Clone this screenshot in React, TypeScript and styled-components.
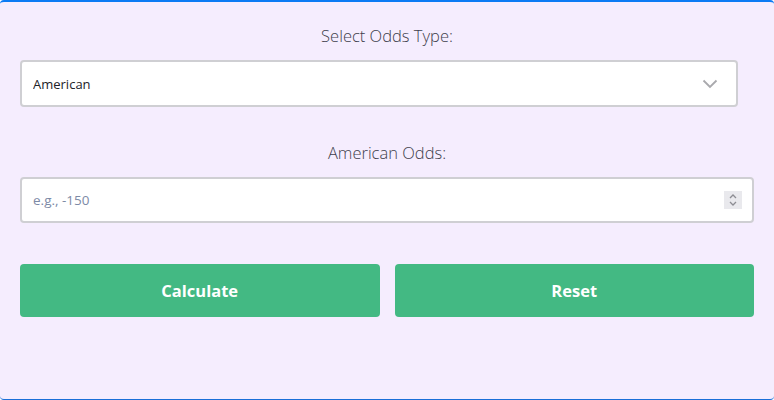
import React, { useState } from 'react';
import styled, { createGlobalStyle } from 'styled-components';

const GlobalStyle = createGlobalStyle`
  html, body {
    margin: 0;
    padding: 0;
    background: #ffffff;
  }
  body {
    font-family: 'Open Sans', 'Noto Sans', Arial, sans-serif;
  }
  * {
    box-sizing: border-box;
  }
`;

const Card = styled.div`
  width: 774px;
  height: 400px;
  background: #f5edfe;
  border-top: 2px solid #0b7bf4;
  border-bottom: 1px solid #1a6fd8;
  border-radius: 4px;
  padding: 21px 20px 0 20px;
  display: flex;
  flex-direction: column;
`;

const Field = styled.div<{ $gap: number }>`
  display: flex;
  flex-direction: column;
  margin-bottom: ${(p) => p.$gap}px;
`;

const Label = styled.label`
  display: block;
  text-align: center;
  font-size: 16.5px;
  font-weight: 300;
  color: #3e3e4c;
  line-height: 26px;
  margin-bottom: 11px;
`;

const ControlWrap = styled.div<{ $width: string }>`
  position: relative;
  width: ${(p) => p.$width};
`;

const Select = styled.select`
  appearance: none;
  width: 100%;
  height: 47px;
  padding: 0 40px 0 11px;
  background: #ffffff;
  border: 2px solid #cfcfd3;
  border-radius: 4px;
  font-family: 'Open Sans', 'Noto Sans', Arial, sans-serif;
  font-size: 13px;
  color: #222228;
  outline: none;
`;

const Input = styled.input`
  width: 100%;
  height: 46px;
  padding: 0 40px 0 11px;
  background: #ffffff;
  border: 2px solid #cfcfd3;
  border-radius: 4px;
  font-family: 'Open Sans', 'Noto Sans', Arial, sans-serif;
  font-size: 13.5px;
  color: #222228;
  outline: none;

  &::placeholder {
    color: #7d8aa6;
  }
`;

const Chevron = styled.svg`
  position: absolute;
  right: 20px;
  top: 50%;
  transform: translateY(-50%);
  pointer-events: none;
`;

const Spinner = styled.div`
  position: absolute;
  right: 12px;
  top: 50%;
  transform: translateY(-50%);
  width: 18px;
  height: 18px;
  background: #e9e9ed;
  display: flex;
  align-items: center;
  justify-content: center;
  pointer-events: none;
`;

const Buttons = styled.div`
  display: grid;
  grid-template-columns: 1fr 1fr;
  column-gap: 15px;
`;

const Button = styled.button`
  height: 53px;
  border: none;
  border-radius: 4px;
  background: #43b983;
  color: #ffffff;
  font-family: 'Open Sans', 'Noto Sans', Arial, sans-serif;
  font-size: 16.5px;
  font-weight: 700;
  cursor: pointer;
`;

export default function App() {
  const [type, setType] = useState('american');
  const [odds, setOdds] = useState('');

  return (
    <>
      <GlobalStyle />
      <Card>
        <Field $gap={33}>
          <Label htmlFor="odds-type">Select Odds Type:</Label>
          <ControlWrap $width="718px">
            <Select id="odds-type" value={type} onChange={(e) => setType(e.target.value)}>
              <option value="american">American</option>
              <option value="decimal">Decimal</option>
              <option value="fractional">Fractional</option>
            </Select>
            <Chevron width="16" height="10" viewBox="0 0 16 10">
              <path d="M1.5 1.5 L8 8 L14.5 1.5" fill="none" stroke="#a9a9ad" strokeWidth="1.8" />
            </Chevron>
          </ControlWrap>
        </Field>
        <Field $gap={41}>
          <Label htmlFor="odds-value">American Odds:</Label>
          <ControlWrap $width="100%">
            <Input
              id="odds-value"
              type="text"
              placeholder="e.g., -150"
              value={odds}
              onChange={(e) => setOdds(e.target.value)}
            />
            <Spinner>
              <svg width="10" height="14" viewBox="0 0 10 14">
                <path d="M2 5 L5 2 L8 5" fill="none" stroke="#8d8d93" strokeWidth="1.3" />
                <path d="M2 9 L5 12 L8 9" fill="none" stroke="#8d8d93" strokeWidth="1.3" />
              </svg>
            </Spinner>
          </ControlWrap>
        </Field>
        <Buttons>
          <Button type="button">Calculate</Button>
          <Button type="button" onClick={() => setOdds('')}>Reset</Button>
        </Buttons>
      </Card>
    </>
  );
}
